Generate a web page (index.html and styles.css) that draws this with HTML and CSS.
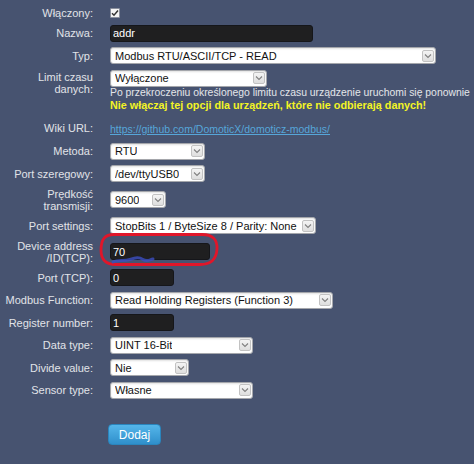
FILE: index.html
```html
<!DOCTYPE html>
<html lang="pl">
<head>
<meta charset="utf-8">
<title>Modbus</title>
<link rel="stylesheet" href="styles.css">
</head>
<body>
<form class="form">
  <div class="row">
    <label class="lbl">Włączony:</label>
    <div class="ctl"><span class="chk"><svg width="10" height="10" viewBox="0 0 10 10"><path d="M2 5.2 L4 7.2 L8 2.6" fill="none" stroke="#333" stroke-width="1.5"/></svg></span></div>
  </div>
  <div class="row">
    <label class="lbl">Nazwa:</label>
    <div class="ctl"><input class="inp w-name" value="addr"></div>
  </div>
  <div class="row">
    <label class="lbl">Typ:</label>
    <div class="ctl"><div class="sel w-typ"><span class="val">Modbus RTU/ASCII/TCP - READ</span><span class="arr"><svg width="8" height="6" viewBox="0 0 8 6"><path d="M1 1.5 L4 4.5 L7 1.5" fill="none" stroke="#808080" stroke-width="1.1"/></svg></span></div></div>
  </div>
  <div class="row top">
    <label class="lbl">Limit czasu<br>danych:</label>
    <div class="ctl">
      <div class="sel w-limit"><span class="val">Wyłączone</span><span class="arr"><svg width="8" height="6" viewBox="0 0 8 6"><path d="M1 1.5 L4 4.5 L7 1.5" fill="none" stroke="#808080" stroke-width="1.1"/></svg></span></div>
      <div class="help">Po przekroczeniu określonego limitu czasu urządzenie uruchomi się ponownie</div>
      <div class="help warn">Nie włączaj tej opcji dla urządzeń, które nie odbierają danych!</div>
    </div>
  </div>
  <div class="row wiki">
    <label class="lbl">Wiki URL:</label>
    <div class="ctl"><a class="link" href="#">https://github.com/DomoticX/domoticz-modbus/</a></div>
  </div>
  <div class="row">
    <label class="lbl">Metoda:</label>
    <div class="ctl"><div class="sel w-metoda"><span class="val">RTU</span><span class="arr"><svg width="8" height="6" viewBox="0 0 8 6"><path d="M1 1.5 L4 4.5 L7 1.5" fill="none" stroke="#808080" stroke-width="1.1"/></svg></span></div></div>
  </div>
  <div class="row">
    <label class="lbl">Port szeregowy:</label>
    <div class="ctl"><div class="sel w-metoda"><span class="val">/dev/ttyUSB0</span><span class="arr"><svg width="8" height="6" viewBox="0 0 8 6"><path d="M1 1.5 L4 4.5 L7 1.5" fill="none" stroke="#808080" stroke-width="1.1"/></svg></span></div></div>
  </div>
  <div class="row">
    <label class="lbl">Prędkość<br>transmisji:</label>
    <div class="ctl"><div class="sel w-speed"><span class="val">9600</span><span class="arr"><svg width="8" height="6" viewBox="0 0 8 6"><path d="M1 1.5 L4 4.5 L7 1.5" fill="none" stroke="#808080" stroke-width="1.1"/></svg></span></div></div>
  </div>
  <div class="row">
    <label class="lbl">Port settings:</label>
    <div class="ctl"><div class="sel w-ps"><span class="val">StopBits 1 / ByteSize 8 / Parity: None</span><span class="arr"><svg width="8" height="6" viewBox="0 0 8 6"><path d="M1 1.5 L4 4.5 L7 1.5" fill="none" stroke="#808080" stroke-width="1.1"/></svg></span></div></div>
  </div>
  <div class="row">
    <label class="lbl">Device address<br>/ID(TCP):</label>
    <div class="ctl annotated">
      <input class="inp w-dev" value="70">
      <svg class="mark" width="122" height="36" viewBox="0 0 122 36">
        <path d="M15 2.5 H103 C114 2.5 118.5 8 118 17 C117.5 27 112 32.5 101 32.5 H17 C7 32.5 2 28 2 18 C2 7 6 2.5 15 2.5 Z" fill="none" stroke="#e0162a" stroke-width="2.8"/>
        <path d="M14 30 C19 27.5 25 29.5 31 27.5 S40 25 44 27.5 S50 28 54 27" fill="none" stroke="#3c4fc2" stroke-width="3" stroke-linecap="round" opacity="0.8"/>
      </svg>
    </div>
  </div>
  <div class="row">
    <label class="lbl">Port (TCP):</label>
    <div class="ctl"><input class="inp w-port" value="0"></div>
  </div>
  <div class="row">
    <label class="lbl">Modbus Function:</label>
    <div class="ctl"><div class="sel w-func"><span class="val">Read Holding Registers (Function 3)</span><span class="arr"><svg width="8" height="6" viewBox="0 0 8 6"><path d="M1 1.5 L4 4.5 L7 1.5" fill="none" stroke="#808080" stroke-width="1.1"/></svg></span></div></div>
  </div>
  <div class="row">
    <label class="lbl">Register number:</label>
    <div class="ctl"><input class="inp w-port" value="1"></div>
  </div>
  <div class="row">
    <label class="lbl">Data type:</label>
    <div class="ctl"><div class="sel w-data"><span class="val">UINT 16-Bit</span><span class="arr"><svg width="8" height="6" viewBox="0 0 8 6"><path d="M1 1.5 L4 4.5 L7 1.5" fill="none" stroke="#808080" stroke-width="1.1"/></svg></span></div></div>
  </div>
  <div class="row">
    <label class="lbl">Divide value:</label>
    <div class="ctl"><div class="sel w-div"><span class="val">Nie</span><span class="arr"><svg width="8" height="6" viewBox="0 0 8 6"><path d="M1 1.5 L4 4.5 L7 1.5" fill="none" stroke="#808080" stroke-width="1.1"/></svg></span></div></div>
  </div>
  <div class="row">
    <label class="lbl">Sensor type:</label>
    <div class="ctl"><div class="sel w-data"><span class="val">Własne</span><span class="arr"><svg width="8" height="6" viewBox="0 0 8 6"><path d="M1 1.5 L4 4.5 L7 1.5" fill="none" stroke="#808080" stroke-width="1.1"/></svg></span></div></div>
  </div>
  <div class="row submit">
    <span class="lbl"></span>
    <div class="ctl"><button type="button" class="btn">Dodaj</button></div>
  </div>
</form>
</body>
</html>
```

FILE: styles.css
```css
html, body {
  margin: 0;
  padding: 0;
  background: #475370;
}
body {
  font-family: "Liberation Sans", Arial, sans-serif;
  height: 464px;
  overflow: hidden;
}
.form {
  display: flex;
  flex-direction: column;
  gap: 5.5px;
  padding-top: 6px;
}
.row {
  display: grid;
  grid-template-columns: 93px 1fr;
  column-gap: 17px;
  align-items: center;
  min-height: 13px;
}
.row.top {
  align-items: start;
}
.row.top .lbl {
  padding-top: 1px;
}
.lbl {
  text-align: right;
  color: #e1e3e8;
  font-size: 11px;
  line-height: 12px;
}
.ctl {
  min-width: 0;
}
.chk {
  display: block;
  width: 10px;
  height: 10px;
  box-sizing: border-box;
  background: #f4f4f4;
  border: 1px solid #8a8f9c;
  border-radius: 1px;
}
.chk svg {
  display: block;
  margin: -1px 0 0 -1px;
}
.inp {
  display: block;
  height: 17px;
  box-sizing: border-box;
  margin: 0;
  background: #1f1f20;
  border: 1px solid #15161a;
  border-radius: 3px;
  color: #fff;
  font-family: "Liberation Sans", Arial, sans-serif;
  font-size: 11px;
  padding: 0 2px;
  outline: none;
}
.w-name { width: 203px; }
.w-dev { width: 100px; }
.w-port { width: 64px; }
.sel {
  height: 17px;
  box-sizing: border-box;
  border: 1px solid #a4a6ab;
  border-radius: 3px;
  background: #fff;
  box-shadow: inset 0 1px 2px rgba(0,0,0,0.12);
  display: flex;
  align-items: center;
  justify-content: space-between;
  padding: 0 1px 0 4px;
  font-family: "Liberation Sans", Arial, sans-serif;
  font-size: 11px;
  color: #111;
  white-space: nowrap;
}
.val {
  overflow: hidden;
}
.arr {
  flex: none;
  width: 12px;
  height: 12px;
  box-sizing: border-box;
  border: 1px solid #c2c2c2;
  border-radius: 2px;
  background: linear-gradient(#f4f4f4, #dedede);
  display: flex;
  align-items: center;
  justify-content: center;
}
.w-typ { width: 326px; }
.w-limit { width: 157px; }
.w-metoda { width: 95px; }
.w-speed { width: 56px; }
.w-ps { width: 206px; }
.w-func { width: 223px; }
.w-data { width: 143px; }
.w-div { width: 79px; }
.help {
  color: #e4e6ea;
  font-size: 10.4px;
  line-height: 12.5px;
  white-space: nowrap;
}
.help.warn {
  color: #f3f325;
  font-weight: bold;
  font-size: 10.8px;
}
.row.wiki {
  margin-top: 2px;
  min-height: 17px;
}
.link {
  color: #56a6d9;
  font-size: 10.5px;
  text-decoration: underline;
}
.annotated {
  position: relative;
}
.mark {
  position: absolute;
  left: -11px;
  top: -11px;
  pointer-events: none;
}
.row.submit {
  margin-top: 20px;
}
.btn {
  display: block;
  margin: 0 0 0 -2px;
  width: 53px;
  height: 21px;
  border: 1px solid #2a85bd;
  border-radius: 4px;
  background: linear-gradient(#55b6ea, #2f8fcb);
  color: #fff;
  font-family: "Liberation Sans", Arial, sans-serif;
  font-size: 12px;
  padding: 0;
}
```
